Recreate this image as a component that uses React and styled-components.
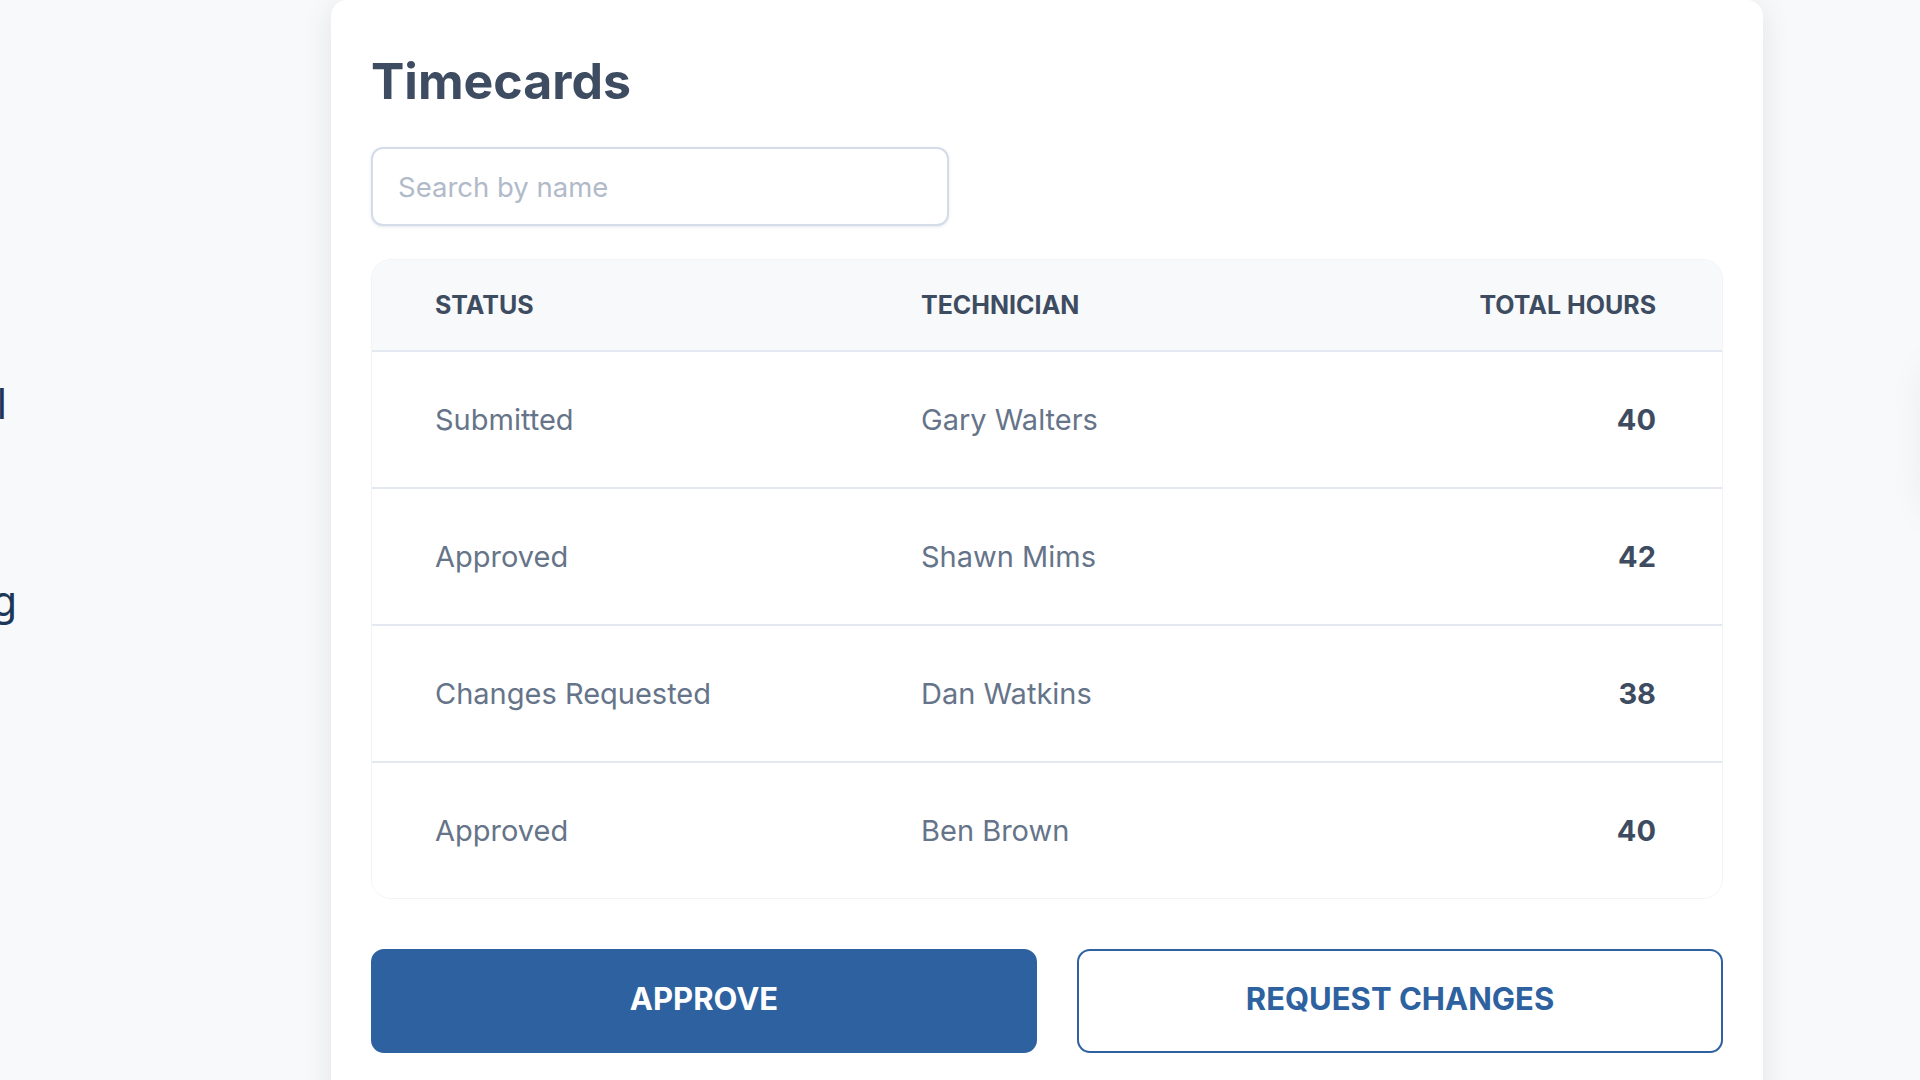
import styled, { createGlobalStyle } from 'styled-components';

const GlobalStyle = createGlobalStyle`
  html, body {
    margin: 0;
    padding: 0;
    overflow: hidden;
    background: #f8f9fa;
  }
  * {
    box-sizing: border-box;
  }
  body {
    font-family: Inter, "Noto Sans", "Liberation Sans", sans-serif;
  }
`;

const Page = styled.div`
  display: flex;
  width: 1920px;
  height: 100vh;
  overflow: hidden;
  background: #f8f9fa;
`;

// the nav sits mostly off the left edge, only a letter shows
const Sidebar = styled.nav`
  width: 331px;
  flex-shrink: 0;
  display: flex;
  flex-direction: column;
  gap: 147px;
  padding-top: 379px;
`;

const NavItem = styled.div`
  display: flex;
  justify-content: flex-end;
  width: 40px;
  margin-left: ${props => props.$shift}px;
  height: 50px;
  font-size: 42px;
  line-height: 50px;
  color: #1c3757;
  white-space: nowrap;
`;

const Card = styled.main`
  width: 1432px;
  flex-shrink: 0;
  min-height: 1160px;
  padding: 51px 40px 60px;
  background: #fff;
  border-radius: 16px;
  box-shadow: 0 4px 32px rgba(15, 23, 42, 0.09);
`;

const Title = styled.h1`
  margin: 0 0 36px;
  font-size: 50px;
  line-height: 60px;
  font-weight: 700;
  color: #3e4c61;
`;

const Search = styled.input`
  display: block;
  width: 578px;
  height: 79px;
  padding: 0 25px;
  border: 2px solid #d3dce8;
  border-radius: 12px;
  box-shadow: 0 1px 3px rgba(148, 163, 184, 0.25);
  font-family: inherit;
  font-size: 27.5px;
  color: #3e4c61;
  outline: none;

  &::placeholder {
    color: #b1bac8;
  }
`;

const Table = styled.div`
  margin-top: 33px;
  border: 1px solid #f1f3f6;
  border-radius: 20px;
  overflow: hidden;
  background: #fff;
`;

const Row = styled.div`
  display: grid;
  grid-template-columns: 486px 1fr 1fr;
  align-items: center;
  height: ${props => (props.$head ? 90 : 137)}px;
  background: ${props => (props.$head ? '#f8f9fa' : '#fff')};
  border-top: ${props => (props.$first ? 'none' : '2px solid #e4e9f1')};
`;

const HeadCell = styled.div`
  padding: 0 66px 0 63px;
  font-size: 25px;
  font-weight: 700;
  color: #3e4c61;
  text-align: ${props => props.$align || 'left'};
`;

const Cell = styled.div`
  padding: 0 66px 0 63px;
  font-size: 29px;
  color: ${props => (props.$strong ? '#3e4c61' : '#667489')};
  font-weight: ${props => (props.$strong ? 700 : 400)};
  text-align: ${props => props.$align || 'left'};
`;

const Actions = styled.div`
  display: grid;
  grid-template-columns: 666px 1fr;
  gap: 40px;
  margin-top: 50px;
`;

const Button = styled.button`
  height: 104px;
  padding: 0 0 5px;
  border-radius: 13px;
  border: 2px solid #2d61a0;
  background: ${props => (props.$primary ? '#2d61a0' : '#fff')};
  color: ${props => (props.$primary ? '#fff' : '#2d61a0')};
  font-family: inherit;
  font-size: 31px;
  font-weight: 700;
  cursor: pointer;
`;

const PeekPanel = styled.div`
  flex-shrink: 0;
  width: 320px;
  height: 150px;
  margin: 360px 0 0 165px;
  border-radius: 16px;
  background: #f8f9fa;
  box-shadow: 0 4px 40px rgba(15, 23, 42, 0.08);
`;

const timecards = [
  { status: 'Submitted', name: 'Gary Walters', hours: 40 },
  { status: 'Approved', name: 'Shawn Mims', hours: 42 },
  { status: 'Changes Requested', name: 'Dan Watkins', hours: 38 },
  { status: 'Approved', name: 'Ben Brown', hours: 40 },
];

function App() {
  return (
    <>
      <GlobalStyle />
      <Page>
        <Sidebar>
          <NavItem $shift={-33}>Payroll</NavItem>
          <NavItem $shift={-23}>Billing</NavItem>
        </Sidebar>
        <Card>
          <Title>Timecards</Title>
          <Search placeholder="Search by name" />
          <Table>
            <Row $head $first>
              <HeadCell>STATUS</HeadCell>
              <HeadCell>TECHNICIAN</HeadCell>
              <HeadCell $align="right">TOTAL HOURS</HeadCell>
            </Row>
            {timecards.map((t, i) => (
              <Row key={i}>
                <Cell>{t.status}</Cell>
                <Cell>{t.name}</Cell>
                <Cell $strong $align="right">{t.hours}</Cell>
              </Row>
            ))}
          </Table>
          <Actions>
            <Button $primary>APPROVE</Button>
            <Button>REQUEST CHANGES</Button>
          </Actions>
        </Card>
        <PeekPanel />
      </Page>
    </>
  );
}

export default App;
